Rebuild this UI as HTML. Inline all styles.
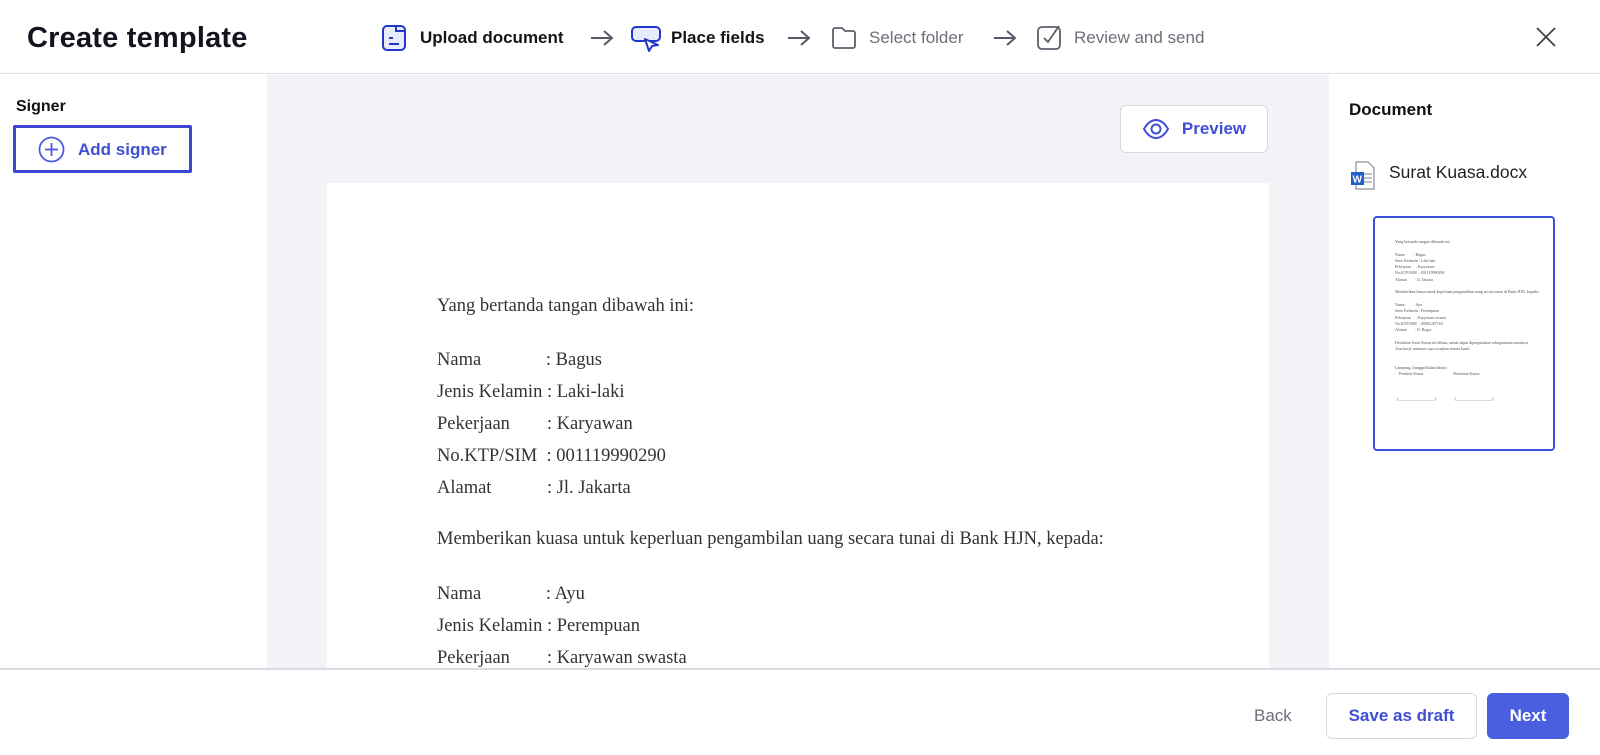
<!DOCTYPE html>
<html><head><meta charset="utf-8"><style>
*{margin:0;padding:0;box-sizing:border-box}
body{width:1600px;height:755px;overflow:hidden;background:#fff;font-family:"Liberation Sans",sans-serif;position:relative;color:#111}
.abs{position:absolute}
.hdr{left:0;top:0;width:1600px;height:74px;border-bottom:1px solid #dcdfe6;background:#fff}
.title{left:27px;top:22px;font-size:29px;font-weight:600;color:#121420;letter-spacing:0.2px}
.step{top:28px;font-size:17px;white-space:nowrap}
.center{left:267px;top:75px;width:1062px;height:593px;background:#f2f3f7}
.page{left:327px;top:183px;width:942px;height:485px;background:#fff}
.doc{font-family:"Liberation Serif",serif;font-size:18.5px;color:#333;white-space:pre}
.foot{left:0;top:668px;width:1600px;height:87px;border-top:2px solid #d9dde6;background:#fff}
.btn{border:1px solid #d5d9e2;border-radius:6px;background:#fff;color:#3f4fd6;font-weight:700;font-size:17px;display:flex;align-items:center;justify-content:center}
</style></head><body>
<div class="abs hdr"></div>
<div class="abs title">Create template</div>

<svg class="abs" style="left:381px;top:24px" width="26" height="28" viewBox="0 0 26 28"><rect x="2" y="2" width="22" height="24" rx="4" fill="#e8ebfb" stroke="#2338c8" stroke-width="2"/><path d="M15 2v5h9" fill="none" stroke="#2338c8" stroke-width="2"/><path d="M8 14h4M8 20h10" stroke="#2338c8" stroke-width="2"/></svg>
<div class="abs step" style="left:420px;font-weight:700;color:#151515">Upload document</div>
<svg class="abs" style="left:589px;top:28px" width="26" height="20" viewBox="0 0 26 20"><path d="M2 10h21M15 3l8 7-8 7" fill="none" stroke="#555b66" stroke-width="2"/></svg>
<svg class="abs" style="left:631px;top:25px" width="32" height="28" viewBox="0 0 32 28"><path d="M5 2h20a4 4 0 0 1 4 4v6a4 4 0 0 1-4 4H5a4 4 0 0 1-4-4V6a4 4 0 0 1 4-4z" fill="#e8ebfb" stroke="#2338c8" stroke-width="2"/><path d="M14 14l4 12 3-5 6-1z" fill="#fff" stroke="#2338c8" stroke-width="2" stroke-linejoin="round"/></svg>
<div class="abs step" style="left:671px;font-weight:700;color:#151515">Place fields</div>
<svg class="abs" style="left:786px;top:28px" width="26" height="20" viewBox="0 0 26 20"><path d="M2 10h21M15 3l8 7-8 7" fill="none" stroke="#555b66" stroke-width="2"/></svg>
<svg class="abs" style="left:831px;top:25px" width="26" height="26" viewBox="0 0 26 26"><path d="M4 3h7l3 3h8a2 2 0 0 1 2 2v13a2 2 0 0 1-2 2H4a2 2 0 0 1-2-2V5a2 2 0 0 1 2-2z" fill="none" stroke="#5a606b" stroke-width="1.8"/></svg>
<div class="abs step" style="left:869px;color:#6b7079">Select folder</div>
<svg class="abs" style="left:992px;top:28px" width="26" height="20" viewBox="0 0 26 20"><path d="M2 10h21M15 3l8 7-8 7" fill="none" stroke="#555b66" stroke-width="2"/></svg>
<svg class="abs" style="left:1036px;top:23px" width="28" height="28" viewBox="0 0 28 28"><rect x="2" y="4" width="22" height="22" rx="4" fill="none" stroke="#5a606b" stroke-width="1.8"/><path d="M8 15l4 4 11-16" fill="none" stroke="#5a606b" stroke-width="1.8"/></svg>
<div class="abs step" style="left:1074px;color:#6b7079">Review and send</div>
<svg class="abs" style="left:1535px;top:26px" width="22" height="22" viewBox="0 0 22 22"><path d="M2 2l18 18M20 2L2 20" stroke="#444" stroke-width="1.8"/></svg>

<div class="abs" style="left:16px;top:98px;font-size:16px;font-weight:600">Signer</div>
<div class="abs" style="left:13px;top:125px;width:179px;height:48px;border:3px solid #3b47d4;border-radius:2px"></div>
<svg class="abs" style="left:38px;top:136px" width="27" height="27" viewBox="0 0 27 27"><circle cx="13.5" cy="13.5" r="12" fill="none" stroke="#4a5bdb" stroke-width="1.8"/><path d="M13.5 7v13M7 13.5h13" stroke="#4a5bdb" stroke-width="1.8"/></svg>
<div class="abs" style="left:78px;top:140px;font-size:17px;font-weight:700;color:#3f4fd6">Add signer</div>

<div class="abs center"></div>
<div class="abs btn" style="left:1120px;top:105px;width:148px;height:48px"><svg width="28" height="22" viewBox="0 0 28 22" style="margin-right:12px"><path d="M2 11C6 4 10 2 14 2s8 2 12 9c-4 7-8 9-12 9S6 18 2 11z" fill="none" stroke="#3f4fd6" stroke-width="2"/><circle cx="14" cy="11" r="4.5" fill="none" stroke="#3f4fd6" stroke-width="2"/></svg>Preview</div>
<div class="abs page"></div>
<div class="abs doc" style="left:437px;top:296px">Yang bertanda tangan dibawah ini:</div>
<div class="abs doc" style="left:437px;top:344px;line-height:32px">Nama              : Bagus
Jenis Kelamin : Laki-laki
Pekerjaan        : Karyawan
No.KTP/SIM  : 001119990290
Alamat            : Jl. Jakarta</div>
<div class="abs doc" style="left:437px;top:529px">Memberikan kuasa untuk keperluan pengambilan uang secara tunai di Bank HJN, kepada:</div>
<div class="abs doc" style="left:437px;top:578px;line-height:32px">Nama              : Ayu
Jenis Kelamin : Perempuan
Pekerjaan        : Karyawan swasta</div>

<div class="abs" style="left:1349px;top:100px;font-size:17px;font-weight:600">Document</div>
<svg class="abs" style="left:1351px;top:161px" width="24" height="29" viewBox="0 0 24 29"><path d="M5 1h12l6 6v21H5z" fill="#fff" stroke="#8a8f99" stroke-width="1.2"/><path d="M13 13h8M13 17h8M13 21h8" stroke="#aab" stroke-width="1.5"/><rect x="0" y="11" width="13" height="13" fill="#1f5fc8"/><text x="1.5" y="21.5" font-size="10" font-weight="700" fill="#fff" font-family="Liberation Sans">W</text></svg>
<div class="abs" style="left:1389px;top:162px;font-size:17.5px;color:#222">Surat Kuasa.docx</div>
<div class="abs" style="left:1373px;top:216px;width:182px;height:235px;border:2px solid #3b52e0;border-radius:4px;background:#fff;font-family:'Liberation Serif',serif;font-size:4px;color:#555;padding:21px 20px;line-height:6.3px;white-space:pre;overflow:hidden">Yang bertanda tangan dibawah ini:

Nama         : Bagus
Jenis Kelamin : Laki-laki
Pekerjaan     : Karyawan
No.KTP/SIM  : 001119990290
Alamat        : Jl. Jakarta

Memberikan kuasa untuk keperluan pengambilan uang secara tunai di Bank HJN, kepada:

Nama         : Ayu
Jenis Kelamin : Perempuan
Pekerjaan     : Karyawan swasta
No.KTP/SIM  : 00001287163
Alamat        : Jl. Bogor

Demikian Surat Kuasa ini dibuat, untuk dapat dipergunakan sebagaimana mestinya.
Atas kerja samanya saya ucapkan terima kasih.


Lampung, (tanggal/bulan/tahun)
    Pemberi Kuasa                              Penerima Kuasa



  (__________________)                   (__________________)</div>

<div class="abs foot"></div>
<div class="abs" style="left:1254px;top:706px;font-size:17px;color:#6b7079">Back</div>
<div class="abs btn" style="left:1326px;top:693px;width:151px;height:46px">Save as draft</div>
<div class="abs btn" style="left:1487px;top:693px;width:82px;height:46px;background:#4a5fdf;border-color:#4a5fdf;color:#fff">Next</div>
</body></html>
